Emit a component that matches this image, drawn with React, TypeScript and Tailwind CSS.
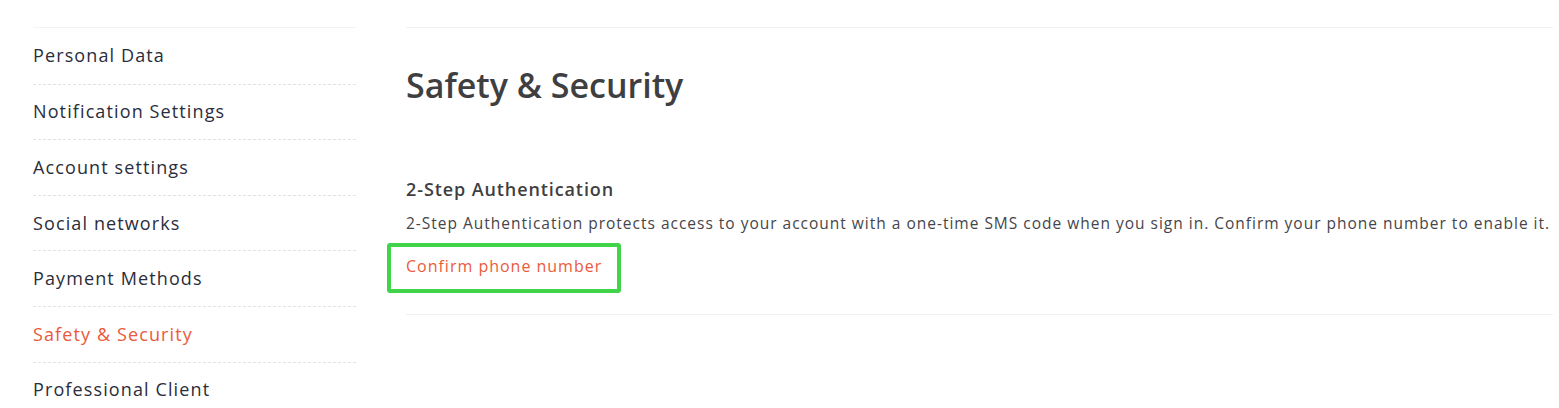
import React from 'react';

const items = [
  'Personal Data',
  'Notification Settings',
  'Account settings',
  'Social networks',
  'Payment Methods',
  'Safety & Security',
  'Professional Client',
];

export default function App() {
  return (
    <div className="w-[1559px] h-[408px] overflow-hidden bg-white flex pl-[33px] pt-[27px] font-['Open_Sans',sans-serif]">
      <nav className="w-[323px] shrink-0 border-t border-[#f3f3f3]">
        {items.map((item, i) => (
          <div
            key={item}
            className={`h-[55.6px] flex items-center text-[18px] tracking-[0.062em] ${i > 0 ? 'border-t border-dashed border-[#e2e2e2]' : ''} ${
              item === 'Safety & Security' ? 'text-[#ea5a3b]' : 'text-[#2b2d3b]'
            }`}
          >
            {item}
          </div>
        ))}
      </nav>

      <main className="ml-[50px] w-[1147px] shrink-0 self-start border-t border-b border-[#f0f0f0]">
        <h1 className="mt-[35px] text-[34px] leading-[44px] font-semibold text-[#3f3f42]">Safety &amp; Security</h1>
        <h2 className="mt-[69px] text-[18px] leading-[26px] font-semibold tracking-[0.05em] text-[#3f3f42]">2-Step Authentication</h2>
        <p className="mt-[9px] text-[15.5px] leading-[24px] tracking-[0.064em] text-[#45454a] whitespace-nowrap">
          2-Step Authentication protects access to your account with a one-time SMS code when you sign in. Confirm your phone number to enable it.
        </p>
        <div className="mt-[8px] mb-[21px] -ml-[19px] inline-flex h-[50px] items-center border-4 border-[#3fd44a] rounded-[3px] px-[15px] pb-[5px]">
          <a href="#" className="text-[16px] tracking-[0.062em] text-[#ea5a3b]">Confirm phone number</a>
        </div>
      </main>
    </div>
  );
}
